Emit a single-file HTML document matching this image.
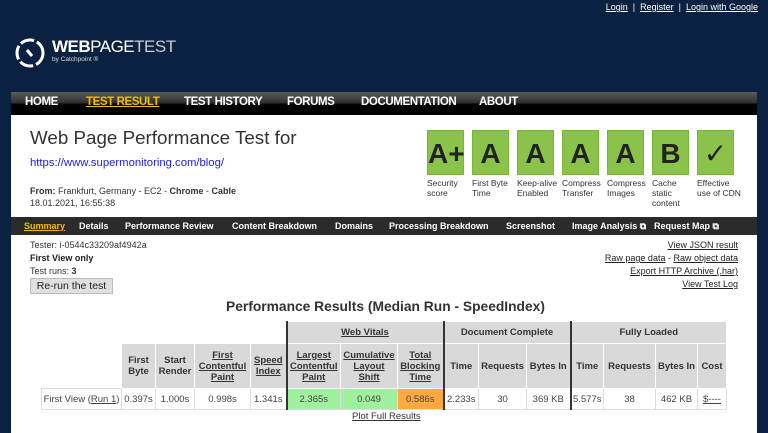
<!DOCTYPE html>
<html><head><meta charset="utf-8"><style>
*{margin:0;padding:0;box-sizing:border-box}
body{width:768px;height:433px;overflow:hidden;background:#0b2141;font-family:"Liberation Sans",Arial,sans-serif;position:relative;color:#222}
.a{position:absolute}
a{color:inherit}
#top{right:10px;top:2px;font-size:9px;color:#fff}
#top a{color:#fff;text-decoration:underline}
#nav{left:11px;top:92px;width:746px;height:23px;background:linear-gradient(#5a5a5a 0,#333 45%,#000 55%,#000 100%)}
#nav span{position:absolute;top:4px;color:#fff;font-weight:bold;font-size:11.5px;letter-spacing:-.4px}
#panel{left:11px;top:115px;width:746px;height:318px;background:#fff}
.g{position:absolute;top:130px;width:37px;height:45px;background:#8bc34a;border:1px solid #7ab33b;font-size:28px;font-weight:bold;color:#222;text-align:center;line-height:45px}
.gl{position:absolute;top:178px;font-size:8.5px;line-height:10px;color:#333}
#sub{left:11px;top:217px;width:746px;height:18px;background:#2b2b2b}
#sub span{position:absolute;top:4px;color:#fff;font-weight:bold;font-size:9px}
.r{font-size:9px;text-align:right;right:30px}
table{position:absolute;left:41px;top:321px;border-collapse:collapse;table-layout:fixed;font-size:9.5px;text-align:center}
td,th{border:1px solid #ddd;padding:0}
th{background:#d9d9d9;border:1px solid #fff;font-weight:bold;color:#333}
.tk{border-left:2px solid #333!important}
</style></head><body>
<div id="top" class="a"><a>Login</a> &nbsp;|&nbsp; <a>Register</a> &nbsp;|&nbsp; <a>Login with Google</a></div>
<svg class="a" style="left:12px;top:34px" width="36" height="36" viewBox="0 0 36 36"><circle cx="18" cy="19" r="13" fill="none" stroke="#fff" stroke-width="3" stroke-dasharray="14 3"/><path d="M15 16 L20 22" stroke="#fff" stroke-width="3"/></svg>
<div class="a" style="left:52px;top:37px;color:#fff;font-size:17px;letter-spacing:-.5px"><b>WEB</b>PAGE<span style="color:#ccc;font-weight:300">TEST</span></div>
<div class="a" style="left:52px;top:56px;color:#ddd;font-size:6.5px">by Catchpoint ®</div>
<div id="nav" class="a">
<span style="left:14px">HOME</span><span style="left:75px;color:#f0c000;text-decoration:underline">TEST RESULT</span><span style="left:173px">TEST HISTORY</span><span style="left:276px">FORUMS</span><span style="left:350px">DOCUMENTATION</span><span style="left:468px">ABOUT</span></div>
<div id="panel" class="a"></div>
<div class="a" style="left:30px;top:127px;font-size:18.8px;color:#333">Web Page Performance Test for</div>
<div class="a" style="left:30px;top:157px;font-size:11.3px;color:#2222cc">https://www.supermonitoring.com/blog/</div>
<div class="a" style="left:30px;top:186px;font-size:9px;color:#333"><b>From:</b> Frankfurt, Germany - EC2 - <b>Chrome</b> - <b>Cable</b></div>
<div class="a" style="left:30px;top:198px;font-size:9px;color:#333">18.01.2021, 16:55:38</div>
<div class="g" style="left:427px">A+</div><div class="g" style="left:472px">A</div><div class="g" style="left:517px">A</div><div class="g" style="left:562px">A</div><div class="g" style="left:607px">A</div><div class="g" style="left:652px">B</div><div class="g" style="left:697px;font-weight:normal">✓</div>
<div class="gl" style="left:427px">Security<br>score</div><div class="gl" style="left:472px">First Byte<br>Time</div><div class="gl" style="left:517px">Keep-alive<br>Enabled</div><div class="gl" style="left:562px">Compress<br>Transfer</div><div class="gl" style="left:607px">Compress<br>Images</div><div class="gl" style="left:652px">Cache<br>static<br>content</div><div class="gl" style="left:697px">Effective<br>use of CDN</div>
<div id="sub" class="a"><span style="left:13px;color:#f0c000;text-decoration:underline">Summary</span><span style="left:68px">Details</span><span style="left:114px">Performance Review</span><span style="left:221px">Content Breakdown</span><span style="left:324px">Domains</span><span style="left:378px">Processing Breakdown</span><span style="left:495px">Screenshot</span><span style="left:561px">Image Analysis ⧉</span><span style="left:643px">Request Map ⧉</span></div>
<div class="a" style="left:30px;top:240px;font-size:9px;color:#333">Tester: i-0544c33209af4942a</div>
<div class="a" style="left:30px;top:253px;font-size:9px;font-weight:bold">First View only</div>
<div class="a" style="left:30px;top:266px;font-size:9px;color:#333">Test runs: <b>3</b></div>
<div class="a" style="left:30px;top:278px;width:83px;height:16px;background:#e0e0e0;border:1px solid #bbb;font-size:10.5px;text-align:center;line-height:14px">Re-run the test</div>
<div class="a r" style="top:240px"><u>View JSON result</u></div>
<div class="a r" style="top:253px"><u>Raw page data</u> - <u>Raw object data</u></div>
<div class="a r" style="top:266px"><u>Export HTTP Archive (.har)</u></div>
<div class="a r" style="top:279px"><u>View Test Log</u></div>
<div class="a" style="left:226px;top:299px;font-size:13.8px;font-weight:bold;color:#333">Performance Results (Median Run - SpeedIndex)</div>
<table>
<colgroup><col style="width:80px"><col style="width:34px"><col style="width:39px"><col style="width:56px"><col style="width:36px"><col style="width:54px"><col style="width:57px"><col style="width:46px"><col style="width:35px"><col style="width:48px"><col style="width:44px"><col style="width:33px"><col style="width:52px"><col style="width:42px"><col style="width:29px"></colgroup>
<tr style="height:22px"><td colspan="5" style="border:none;background:#fff"></td><th colspan="3" class="tk"><u>Web Vitals</u></th><th colspan="3" class="tk">Document Complete</th><th colspan="4" class="tk">Fully Loaded</th></tr>
<tr style="height:45px"><td style="border:none;background:#fff"></td><th>First<br>Byte</th><th>Start<br>Render</th><th><u>First<br>Contentful<br>Paint</u></th><th><u>Speed<br>Index</u></th><th class="tk"><u>Largest<br>Contentful<br>Paint</u></th><th><u>Cumulative<br>Layout<br>Shift</u></th><th><u>Total<br>Blocking<br>Time</u></th><th class="tk">Time</th><th>Requests</th><th>Bytes In</th><th class="tk">Time</th><th>Requests</th><th>Bytes In</th><th>Cost</th></tr>
<tr style="height:21px;color:#444"><td>First View (<u>Run 1</u>)</td><td>0.397s</td><td>1.000s</td><td>0.998s</td><td>1.341s</td><td class="tk" style="background:#a0f0a0">2.365s</td><td style="background:#a0f0a0">0.049</td><td style="background:#ffa940">0.586s</td><td class="tk">2.233s</td><td>30</td><td>369 KB</td><td class="tk">5.577s</td><td>38</td><td>462 KB</td><td><u>$----</u></td></tr>
</table>
<div class="a" style="left:352px;top:411px;font-size:9.5px;color:#333"><u>Plot Full Results</u></div>
</body></html>
